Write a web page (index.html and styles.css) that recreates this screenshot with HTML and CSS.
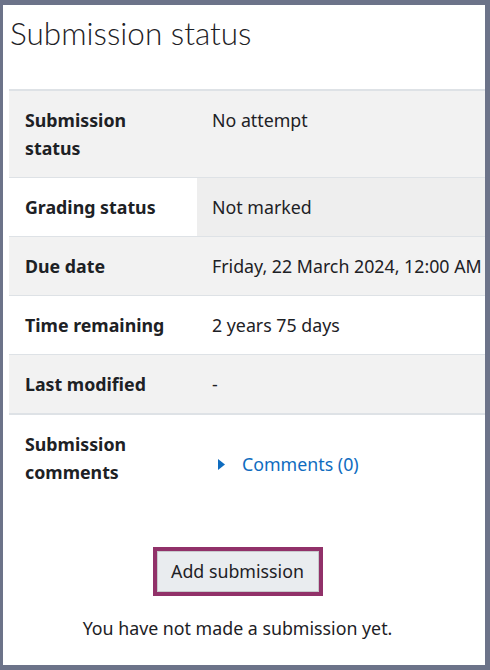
FILE: index.html
```html
<!DOCTYPE html>
<html lang="en">
<head>
<meta charset="utf-8">
<title>Submission status</title>
<link rel="stylesheet" href="styles.css">
</head>
<body>
<div class="frame">
  <h2 class="title">Submission status</h2>
  <table class="status">
    <tbody>
      <tr class="odd">
        <th>Submission status</th>
        <td>No attempt</td>
      </tr>
      <tr class="even">
        <th class="plain">Grading status</th>
        <td class="shade">Not marked</td>
      </tr>
      <tr class="odd">
        <th>Due date</th>
        <td>Friday, 22 March 2024, 12:00 AM</td>
      </tr>
      <tr class="even">
        <th>Time remaining</th>
        <td>2 years 75 days</td>
      </tr>
      <tr class="odd last-shaded">
        <th>Last modified</th>
        <td>-</td>
      </tr>
      <tr class="even final">
        <th>Submission comments</th>
        <td>
          <div class="comments">
            <svg class="caret" width="8" height="11" viewBox="0 0 8 11"><path d="M0 0 L7 5.5 L0 11 Z" fill="#0f6cbf"/></svg>
            <a class="comments-link" href="#">Comments (0)</a>
          </div>
        </td>
      </tr>
    </tbody>
  </table>
  <div class="actions">
    <button class="btn" type="button">Add submission</button>
    <p class="note">You have not made a submission yet.</p>
  </div>
</div>
</body>
</html>
```
FILE: styles.css
```css
html, body {
  margin: 0;
  padding: 0;
}
body {
  background: #6c7389;
  width: 490px;
  height: 670px;
  overflow: hidden;
  font-family: "Noto Sans", "Open Sans", sans-serif;
  color: #1d2125;
}
.frame {
  margin: 5px 5px 5px 3px;
  height: 660px;
  background: #ffffff;
  overflow: hidden;
}
.title {
  margin: 0;
  padding: 8px 0 0 7px;
  height: 84px;
  box-sizing: border-box;
  font-family: "Lato", "Open Sans", sans-serif;
  font-size: 31.5px;
  font-weight: 300;
  line-height: 40px;
  color: #1d2125;
}
.status {
  margin-left: 6px;
  width: 530px;
  border-collapse: collapse;
  border-top: 2px solid #dee2e6;
  font-size: 17.8px;
  line-height: 28px;
}
.status th,
.status td {
  text-align: left;
  vertical-align: top;
  padding: 15px 15px 15px 16px;
  border-bottom: 1px solid #dee2e6;
}
.status th {
  width: 145px;
  padding-right: 27px;
  font-weight: 700;
}
.status td {
  padding-left: 15px;
}
.odd th, .odd td {
  background: #f2f2f2;
}
.even th, .even td {
  background: #ffffff;
}
.status .plain {
  background: #ffffff;
}
.status .shade {
  background: #eeeeee;
}
.last-shaded th, .last-shaded td {
  border-bottom: 2px solid #dee2e6;
}
.final th, .final td {
  border-bottom: none;
}
.comments {
  display: flex;
  align-items: center;
  gap: 16px;
  padding: 20px 0 0 6px;
}
.caret {
  display: block;
}
.comments-link {
  color: #0f6cbf;
  text-decoration: none;
}
.actions {
  padding: 50px 19px 0 6px;
  text-align: center;
}
.btn {
  font-family: inherit;
  font-size: 17.8px;
  line-height: 27px;
  color: #1d2125;
  background: #e9ecef;
  border: 1px solid #c7c9cc;
  padding: 6px 10px;
  width: 162px;
  height: 41px;
  outline: 4px solid #913169;
  outline-offset: 0;
  cursor: pointer;
}
.note {
  margin: 22px 0 0;
  font-size: 17.8px;
  line-height: 28px;
}
```
